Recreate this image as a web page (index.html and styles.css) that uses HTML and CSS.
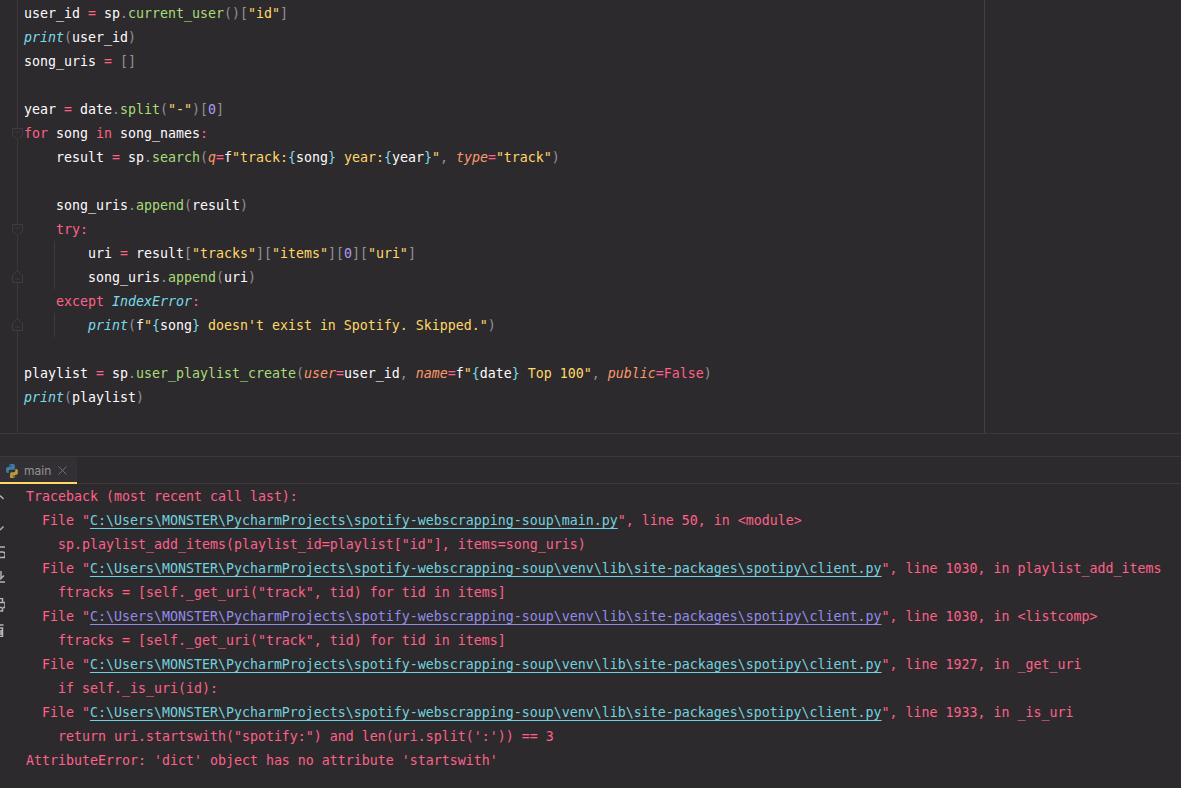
FILE: index.html
```html
<!DOCTYPE html>
<html lang="en">
<head>
<meta charset="utf-8">
<title>main.py</title>
<link rel="stylesheet" href="styles.css">
</head>
<body>
<main class="ide">
  <section class="editor">
    <div class="gutter"></div>
    <div class="code">
      <div class="row">user_id <span class="k">=</span> sp<span class="p">.</span><span class="f">current_user</span><span class="p">()[</span><span class="s">"id"</span><span class="p">]</span></div>
      <div class="row"><span class="b">print</span><span class="p">(</span>user_id<span class="p">)</span></div>
      <div class="row">song_uris <span class="k">=</span> <span class="p">[]</span></div>
      <div class="row"></div>
      <div class="row">year <span class="k">=</span> date<span class="p">.</span><span class="f">split</span><span class="p">(</span><span class="s">"-"</span><span class="p">)[</span><span class="c">0</span><span class="p">]</span></div>
      <div class="row"><svg class="fold fold-start" viewBox="0 0 11 12"><path d="M.5.5h10v7L5.5 11.5.5 7.500zM3 4h5"/></svg><span class="k">for</span> song <span class="k">in</span> song_names<span class="k">:</span></div>
      <div class="row">    result <span class="k">=</span> sp<span class="p">.</span><span class="f">search</span><span class="p">(</span><span class="a">q</span><span class="k">=</span>f<span class="s">"track:</span><span class="i">{</span>song<span class="i">}</span><span class="s"> year:</span><span class="i">{</span>year<span class="i">}</span><span class="s">"</span><span class="p">,</span> <span class="a">type</span><span class="k">=</span><span class="s">"track"</span><span class="p">)</span></div>
      <div class="row"></div>
      <div class="row">    song_uris<span class="p">.</span><span class="f">append</span><span class="p">(</span>result<span class="p">)</span></div>
      <div class="row"><svg class="fold fold-start" viewBox="0 0 11 12"><path d="M.5.5h10v7L5.5 11.5.5 7.500zM3 4h5"/></svg>    <span class="k">try:</span></div>
      <div class="row guide">        uri <span class="k">=</span> result<span class="p">[</span><span class="s">"tracks"</span><span class="p">][</span><span class="s">"items"</span><span class="p">][</span><span class="c">0</span><span class="p">][</span><span class="s">"uri"</span><span class="p">]</span></div>
      <div class="row guide"><svg class="fold fold-end" viewBox="0 0 11 13"><path d="M.5 12.500h10v-7L5.500.5.5 5.500zM3 9h5"/></svg>        song_uris<span class="p">.</span><span class="f">append</span><span class="p">(</span>uri<span class="p">)</span></div>
      <div class="row">    <span class="k">except</span> <span class="b">IndexError</span><span class="k">:</span></div>
      <div class="row guide"><svg class="fold fold-end" viewBox="0 0 11 13"><path d="M.5 12.500h10v-7L5.500.5.5 5.500zM3 9h5"/></svg>        <span class="b">print</span><span class="p">(</span>f<span class="s">"</span><span class="i">{</span>song<span class="i">}</span><span class="s"> doesn't exist in Spotify. Skipped."</span><span class="p">)</span></div>
      <div class="row"></div>
      <div class="row">playlist <span class="k">=</span> sp<span class="p">.</span><span class="f">user_playlist_create</span><span class="p">(</span><span class="a">user</span><span class="k">=</span>user_id<span class="p">,</span> <span class="a">name</span><span class="k">=</span>f<span class="s">"</span><span class="i">{</span>date<span class="i">}</span><span class="s"> Top 100"</span><span class="p">,</span> <span class="a">public</span><span class="k">=False</span><span class="p">)</span></div>
      <div class="row"><span class="b">print</span><span class="p">(</span>playlist<span class="p">)</span></div>
    </div>
  </section>

  <div class="strip"></div>

  <nav class="tabs">
    <div class="tab">
      <svg class="py" viewBox="1.500 1 13 14">
        <path class="py-blue" d="M8 1C5 1 5.200 2.300 5.200 2.300V3.700H8.100V4.100H4C4 4.100 2 3.900 2 7s1.700 3 1.700 3h1V8.500s-.1-1.700 1.700-1.700h2.900s1.600 0 1.600-1.600V2.700S11.200 1 8 1zM6.400 1.900a.5.5 0 1 1 0 1 .5.5 0 0 1 0-1z"/>
        <path class="py-yellow" d="M8 15c3 0 2.800-1.300 2.800-1.300V12.300H7.900V11.900H12c0 0 2 .2 2-2.900s-1.700-3-1.700-3h-1v1.500s.1 1.700-1.700 1.700H7.700s-1.600 0-1.600 1.600v2.500S4.800 15 8 15zM9.600 14.100a.5.5 0 1 1 0-1 .5.5 0 0 1 0 1z"/>
      </svg>
      <span class="tab-name">main</span>
      <svg class="close" viewBox="0 0 9 9"><path d="M.5.5l8 8M8.500.5l-8 8"/></svg>
    </div>
  </nav>

  <section class="run">
    <aside class="tools">
      <svg class="tool t-up" viewBox="0 0 5 6"><path d="M0 0.500L3.500 4"/></svg>
      <svg class="tool t-down" viewBox="0 0 5 6"><path d="M0 5L3.500 1.500"/></svg>
      <svg class="tool t-wrap" viewBox="0 0 5 13"><path d="M0 1H5M0 6H2.500A2.500 2.500 0 0 1 2.500 11.500H0M0 11.500H5"/></svg>
      <svg class="tool t-save" viewBox="0 0 5 12"><path d="M1 0V7M0 8.500L4 4.500M0 11H5"/></svg>
      <svg class="tool t-print" viewBox="0 0 5 14"><path d="M0 .5H2.500V4M0 4.500H5V9.500H2.500M0 9.500H2M0 13H2.500V10"/></svg>
      <svg class="tool t-trash" viewBox="0 0 5 13"><path d="M0 1H3.500M0 4H2.500V12.500H0M1 6V11"/></svg>
    </aside>
    <div class="output">
      <div class="row">Traceback (most recent call last):</div>
      <div class="row">  File "<a class="link">C:\Users\MONSTER\PycharmProjects\spotify-webscrapping-soup\main.py</a>", line 50, in &lt;module&gt;</div>
      <div class="row">    sp.playlist_add_items(playlist_id=playlist["id"], items=song_uris)</div>
      <div class="row">  File "<a class="link">C:\Users\MONSTER\PycharmProjects\spotify-webscrapping-soup\venv\lib\site-packages\spotipy\client.py</a>", line 1030, in playlist_add_items</div>
      <div class="row">    ftracks = [self._get_uri("track", tid) for tid in items]</div>
      <div class="row">  File "<a class="link visited">C:\Users\MONSTER\PycharmProjects\spotify-webscrapping-soup\venv\lib\site-packages\spotipy\client.py</a>", line 1030, in &lt;listcomp&gt;</div>
      <div class="row">    ftracks = [self._get_uri("track", tid) for tid in items]</div>
      <div class="row">  File "<a class="link">C:\Users\MONSTER\PycharmProjects\spotify-webscrapping-soup\venv\lib\site-packages\spotipy\client.py</a>", line 1927, in _get_uri</div>
      <div class="row">    if self._is_uri(id):</div>
      <div class="row">  File "<a class="link">C:\Users\MONSTER\PycharmProjects\spotify-webscrapping-soup\venv\lib\site-packages\spotipy\client.py</a>", line 1933, in _is_uri</div>
      <div class="row">    return uri.startswith("spotify:") and len(uri.split(':')) == 3</div>
      <div class="row">AttributeError: 'dict' object has no attribute 'startswith'</div>
    </div>
  </section>
</main>
</body>
</html>
```

FILE: styles.css
```css
* {
  box-sizing: border-box;
}

html,
body {
  margin: 0;
  height: 100%;
  overflow: hidden;
  background: #2d2a2e;
}

.ide {
  display: flex;
  flex-direction: column;
  height: 788px;
  color: #fcfcfa;
  font-family: "DejaVu Sans Mono", "Liberation Mono", monospace;
  font-size: 13.29px;
}

.row {
  position: relative;
  height: 24px;
  line-height: 26px;
  white-space: pre;
}

/* Editor */
.editor {
  display: flex;
  height: 434px;
  flex: none;
  border-bottom: 1px solid #3a383b;
}

.gutter {
  width: 18px;
  flex: none;
  border-right: 1px solid #3a383b;
}

.code {
  width: 967px;
  flex: none;
  padding: 1px 0 0 6px;
  border-right: 1px solid #423f43;
}

.guide::before {
  content: "";
  position: absolute;
  left: 30px;
  top: 0;
  bottom: 0;
  width: 1px;
  background: #3d3b3e;
}

.fold {
  position: absolute;
  left: -12px;
  width: 11px;
  fill: #2d2a2e;
  stroke: #3f3d40;
  stroke-width: 1;
}

.fold-start {
  top: 7px;
  height: 12px;
}

.fold-end {
  top: 5px;
  height: 13px;
}

.k {
  color: #ff6188;
}

.f {
  color: #a9dc76;
}

.b {
  color: #78dce8;
  font-style: italic;
}

.s {
  color: #ffd866;
}

.i {
  color: #78dce8;
}

.p {
  color: #939293;
}

.a {
  color: #fc9867;
  font-style: italic;
}

.c {
  color: #ab9df2;
}

/* Empty strip between editor and run tool window */
.strip {
  height: 23px;
  flex: none;
  border-bottom: 1px solid #3a383b;
}

/* Tabs */
.tabs {
  display: flex;
  height: 27px;
  flex: none;
  border-bottom: 1px solid #3a383b;
}

.tab {
  display: flex;
  align-items: center;
  width: 77px;
  height: 27px;
  padding: 2px 0 0 5px;
  background: #323034;
  border-bottom: 2px solid #ffd866;
}

.py {
  width: 14px;
  height: 14px;
  flex: none;
}

.py-blue {
  fill: #3f7ba8;
}

.py-yellow {
  fill: #b9993a;
}

.tab-name {
  margin-left: 5px;
  color: #939293;
  font-family: Inter, "Liberation Sans", sans-serif;
  font-size: 12px;
}

.close {
  width: 9px;
  height: 9px;
  margin-left: 7px;
  fill: none;
  stroke: #727072;
  stroke-width: 1;
}

/* Run tool window */
.run {
  display: flex;
  flex: 1;
  min-height: 0;
}

.tools {
  display: flex;
  flex-direction: column;
  width: 5px;
  flex: none;
  padding-top: 11px;
}

.tool {
  display: block;
  width: 5px;
  flex: none;
  fill: none;
  stroke: #b4b4b4;
  stroke-width: 1.500;
}

.t-up {
  height: 6px;
}

.t-down {
  height: 6px;
  margin-top: 24px;
}

.t-wrap {
  height: 13px;
  margin-top: 15px;
}

.t-save {
  height: 12px;
  margin-top: 12px;
}

.t-print {
  height: 14px;
  margin-top: 15px;
}

.t-trash {
  height: 13px;
  margin-top: 12px;
}

.output {
  padding-left: 21px;
  color: #ff6188;
}

.link {
  color: #70d2de;
  text-decoration: underline;
  text-underline-offset: 3px;
}

.visited {
  color: #918ce8;
}
```
